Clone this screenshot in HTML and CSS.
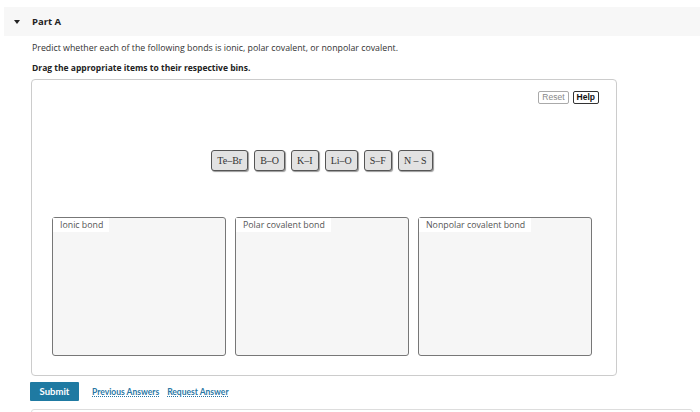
FILE: index.html
```html
<!DOCTYPE html>
<html>
<head>
<meta charset="utf-8">
<link rel="stylesheet" href="styles.css">
</head>
<body>
<div class="part-header">
  <span class="caret"></span>
  <span class="part-title">Part A</span>
</div>
<div class="part-body">
  <p class="prompt">Predict whether each of the following bonds is ionic, polar covalent, or nonpolar covalent.</p>
  <p class="instr">Drag the appropriate items to their respective bins.</p>
  <div class="dnd">
    <div class="tools">
      <button class="tool reset">Reset</button>
      <button class="tool help">Help</button>
    </div>
    <div class="tiles">
      <span class="tile">Te–Br</span>
      <span class="tile">B–O</span>
      <span class="tile">K–I</span>
      <span class="tile">Li–O</span>
      <span class="tile">S–F</span>
      <span class="tile">N – S</span>
    </div>
    <div class="bins">
      <div class="bin"><span class="bin-label">Ionic bond</span></div>
      <div class="bin"><span class="bin-label">Polar covalent bond</span></div>
      <div class="bin"><span class="bin-label">Nonpolar covalent bond</span></div>
    </div>
  </div>
  <div class="actions">
    <button class="submit">Submit</button>
    <a class="link" href="#">Previous Answers</a>
    <a class="link" href="#">Request Answer</a>
  </div>
  <div class="next-box"></div>
</div>
</body>
</html>
```
FILE: styles.css
```css
html, body {
  margin: 0;
  padding: 0;
  background: #fff;
  width: 700px;
  height: 412px;
  overflow: hidden;
  font-family: "Open Sans", "Noto Sans", sans-serif;
  color: #333;
}
.part-header {
  margin: 7px 0 0 4px;
  height: 29px;
  background: #f7f7f7;
  display: flex;
  align-items: center;
  padding-left: 10px;
}
.caret {
  width: 0;
  height: 0;
  border-left: 3px solid transparent;
  border-right: 3px solid transparent;
  border-top: 4px solid #222;
  margin-right: 12px;
}
.part-title {
  font-weight: 700;
  font-size: 9.5px;
  color: #222;
}
.part-body {
  padding-left: 31px;
}
.prompt {
  margin: 7px 0 0 1px;
  font-size: 8.8px;
  line-height: 11px;
  color: #333;
}
.instr {
  margin: 8px 0 0 1px;
  font-size: 8.5px;
  line-height: 11px;
  font-weight: 700;
  color: #222;
}
.dnd {
  margin-top: 6px;
  width: 584px;
  height: 295px;
  border: 1px solid #ccc;
  border-radius: 4px;
  display: flex;
  flex-direction: column;
}
.tools {
  display: flex;
  justify-content: flex-end;
  gap: 4px;
  padding: 11px 17px 0 0;
}
.tool {
  height: 13px;
  padding: 0 3px;
  background: #fff;
  font-family: "Liberation Sans", Arial, sans-serif;
  font-size: 8.5px;
  line-height: 11px;
  border-radius: 2px;
}
.reset {
  border: 1px solid #aaa;
  color: #888;
}
.help {
  border: 1px solid #333;
  color: #111;
  font-weight: 700;
}
.tiles {
  display: flex;
  justify-content: center;
  gap: 6px;
  margin-top: 46px;
  margin-left: -4px;
}
.tile {
  height: 19px;
  padding: 0 5px;
  border: 1px solid #555;
  border-radius: 3px;
  background: #e2e2e2;
  box-shadow: 1px 1px 1px #999;
  font-family: "Liberation Serif", "Times New Roman", serif;
  font-size: 10px;
  line-height: 19px;
  color: #333;
  white-space: pre;
}
.bins {
  display: flex;
  gap: 9px;
  margin: 46px 0 0 20px;
}
.bin {
  width: 172px;
  height: 137px;
  border: 1px solid #777;
  border-radius: 3px;
  background: #f6f6f6;
  font-size: 8.8px;
  line-height: 14px;
}
.bin-label {
  display: block;
  width: fit-content;
  background: #fff;
  padding: 0 6px 0 7px;
  color: #555;
}
.actions {
  display: flex;
  align-items: center;
  margin-top: 6px;
  margin-left: -1px;
}
.submit {
  width: 49px;
  height: 19px;
  background: #1f7aa2;
  border: none;
  border-radius: 1px;
  color: #fff;
  font-family: Lato, sans-serif;
  font-size: 9.5px;
  font-weight: 700;
  padding: 0;
}
.link {
  font-family: Lato, sans-serif;
  font-size: 8.5px;
  font-weight: 700;
  color: #2a77a5;
  text-decoration: underline dotted;
  margin-left: 13px;
}
.link + .link {
  margin-left: 8px;
}
.next-box {
  margin-top: 8px;
  width: 660px;
  height: 20px;
  border: 1px solid #ddd;
  border-radius: 3px;
}
```
